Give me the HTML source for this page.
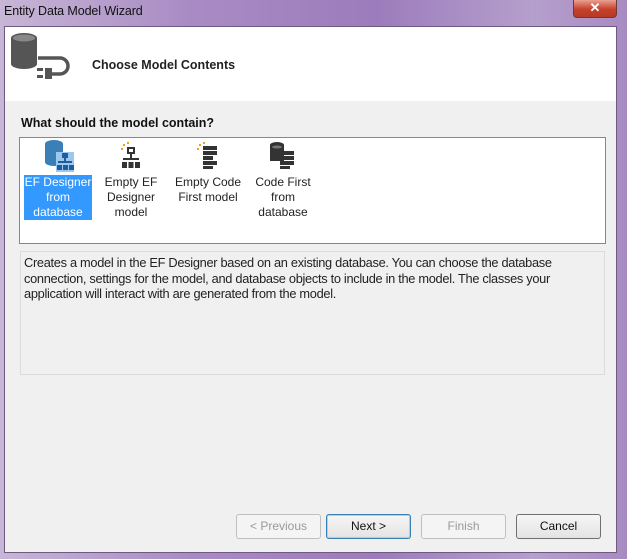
<!DOCTYPE html>
<html><head><style>
*{margin:0;padding:0;box-sizing:border-box}
body{width:627px;height:559px;overflow:hidden;background:linear-gradient(90deg,#c7b6d6 0%,#a98bc4 30%,#9c7cbc 60%,#b59fcc 85%,#a88ac2 100%);font-family:"Liberation Sans","Noto Sans CJK KR",sans-serif;font-size:12px;color:#000;position:relative}
.title{position:absolute;left:4px;top:4px;font-size:12.5px;color:#111;letter-spacing:-0.1px}
.close{position:absolute;left:573px;top:0;width:44px;height:18px;background:linear-gradient(#e8a090,#c7402a 55%,#b53a25);border:1px solid #6b3a3a;border-top:none;border-radius:0 0 4px 4px;color:#fff;text-align:center;font-weight:bold;font-size:13px;line-height:16px}
.client{position:absolute;left:4px;top:26px;width:613px;height:527px;background:#f0f0f0;border:1px solid #6e5a80}
.header{position:absolute;left:0;top:0;width:611px;height:74px;background:#fff}
.htxt{position:absolute;left:87px;top:31px;font-weight:bold;font-size:12.5px;color:#222}
.q{position:absolute;left:16px;top:89px;font-weight:bold;font-size:12.5px;color:#111}
.list{position:absolute;left:14px;top:110px;width:587px;height:107px;background:#fff;border:1px solid #828790}
.item{position:absolute;top:0;width:68px;text-align:center;font-size:12px;line-height:15px;color:#222}
.item svg{display:block;margin:0 auto}
.item .lbl{margin-top:1px}
.sel .lbl{background:#3399ff;color:#fff}
.desc{position:absolute;left:15px;top:224px;width:585px;height:124px;border:1px solid #dcdcdc;background:#f0f0f0;padding:3px 4px 2px 3px;font-size:12.8px;line-height:15.5px;color:#222;letter-spacing:-0.3px}
.btn{position:absolute;top:487px;width:85px;height:25px;border:1px solid #707070;border-radius:3px;background:linear-gradient(#f6f6f6,#e3e3e3);text-align:center;line-height:23px;font-size:12px;color:#111}
.dis{border-color:#bfbfbf;color:#9a9a9a;background:#f4f4f4}
.def{border-color:#3c7fb1;box-shadow:inset 0 0 0 1px #9fd5f4}
</style></head><body>
<div class="title">Entity Data Model Wizard</div>
<div class="close">✕</div>
<div class="client">
 <div class="header">
  <svg style="position:absolute;left:3px;top:5px" width="64" height="52" viewBox="0 0 64 52">
   <g fill="#555">
    <ellipse cx="16" cy="6" rx="13" ry="5"/>
    <rect x="3" y="6" width="26" height="26"/>
    <ellipse cx="16" cy="32" rx="13" ry="5"/>
   </g>
   <ellipse cx="16" cy="6" rx="11" ry="3.5" fill="#888"/>
   <path d="M30 26 H52 a8 8 0 0 1 0 16 H44" fill="none" stroke="#555" stroke-width="3.5"/>
   <rect x="37" y="36" width="7" height="11" fill="#555"/>
   <rect x="29" y="36" width="6" height="3" fill="#555"/>
   <rect x="29" y="43" width="6" height="3" fill="#555"/>
  </svg>
  <div class="htxt">Choose Model Contents</div>
 </div>
 <div class="q">What should the model contain?</div>
 <div class="list">
  <div class="item sel" style="left:4px">
   <svg width="40" height="36" viewBox="0 0 40 36"><ellipse cx="16" cy="6" rx="9" ry="4" fill="#3b7fb8"/><rect x="7" y="6" width="18" height="18" fill="#3b7fb8"/><ellipse cx="16" cy="24" rx="9" ry="4" fill="#3b7fb8"/><rect x="18" y="14" width="18" height="20" fill="#9cc8ee"/><g fill="#1d5f9c"><rect x="24" y="15" width="6" height="5"/><rect x="26" y="20" width="2" height="4"/><rect x="20" y="23" width="14" height="2"/><rect x="19" y="27" width="5" height="5"/><rect x="25" y="27" width="5" height="5"/><rect x="31" y="27" width="5" height="5"/></g></svg>
   <div class="lbl">EF Designer<br>from<br>database</div></div>
  <div class="item" style="left:77px">
   <svg width="40" height="36" viewBox="0 0 40 36"><g fill="#f0a020"><rect x="12" y="6" width="2" height="2"/><rect x="16" y="4" width="2" height="2"/><rect x="10" y="10" width="2" height="2"/></g><g fill="#333"><rect x="16" y="9" width="8" height="7"/><rect x="19" y="16" width="2" height="5"/><rect x="12" y="20" width="16" height="2"/><rect x="11" y="24" width="5" height="6"/><rect x="17.5" y="24" width="5" height="6"/><rect x="24" y="24" width="5" height="6"/></g><rect x="18" y="11" width="4" height="3" fill="#fff"/></svg>
   <div class="lbl">Empty EF<br>Designer<br>model</div></div>
  <div class="item" style="left:154px">
   <svg width="40" height="36" viewBox="0 0 40 36"><g fill="#f0a020"><rect x="11" y="6" width="2" height="2"/><rect x="15" y="4" width="2" height="2"/><rect x="9" y="10" width="2" height="2"/></g><g fill="#333"><rect x="15" y="8" width="14" height="4"/><rect x="15" y="13" width="14" height="4"/><rect x="15" y="18" width="10" height="4"/><rect x="15" y="23" width="14" height="4"/><rect x="15" y="28" width="10" height="3"/></g></svg>
   <div class="lbl">Empty Code<br>First model</div></div>
  <div class="item" style="left:229px">
   <svg width="40" height="36" viewBox="0 0 40 36"><ellipse cx="14" cy="7" rx="7" ry="3" fill="#333"/><rect x="7" y="7" width="14" height="16" fill="#333"/><ellipse cx="14" cy="9" rx="5" ry="1.5" fill="#777"/><g fill="#333"><rect x="17" y="13" width="14" height="4"/><rect x="20" y="18" width="11" height="4"/><rect x="17" y="23" width="14" height="4"/><rect x="17" y="28" width="10" height="3"/></g></svg>
   <div class="lbl">Code First<br>from<br>database</div></div>
 </div>
 <div class="desc">Creates a model in the EF Designer based on an existing database. You can choose the database<br>connection, settings for the model, and database objects to include in the model. The classes your<br>application will interact with are generated from the model.</div>
 <div class="btn dis" style="left:231px">&lt; Previous</div>
 <div class="btn def" style="left:321px">Next &gt;</div>
 <div class="btn dis" style="left:416px">Finish</div>
 <div class="btn" style="left:511px">Cancel</div>
</div>
</body></html>
